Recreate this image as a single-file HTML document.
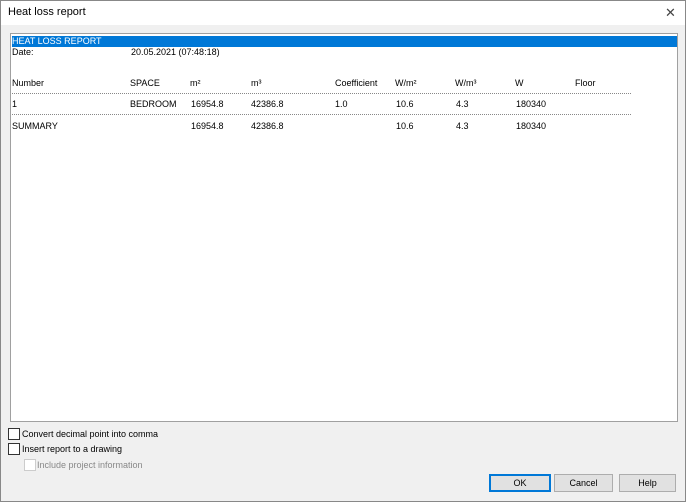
<!DOCTYPE html>
<html><head><meta charset="utf-8"><style>
*{margin:0;padding:0;box-sizing:border-box}
body{width:686px;height:502px;overflow:hidden;background:#f0f0f0;font-family:"Liberation Sans",sans-serif;font-size:9px;color:#000;position:relative}
.win{position:absolute;left:0;top:0;width:686px;height:502px;border:1px solid #888;z-index:5;pointer-events:none}
.title{position:absolute;left:0;top:0;width:686px;height:25px;background:#fff}
.title span{position:absolute;left:8px;top:6px;font-size:11px}
.x{position:absolute;left:665px;top:5px;font-size:13px;color:#444;font-weight:100}
.box{position:absolute;left:10px;top:33px;width:668px;height:389px;background:#fff;border:1px solid #a0a0a0}
.t{position:absolute;white-space:nowrap}
.hl{position:absolute;left:1px;top:2px;width:665px;height:11px;background:#0078d7}
.dash{position:absolute;left:1px;width:619px;height:0;border-top:1px dotted #888}
.cb{position:absolute;width:12px;height:12px;border:1px solid #333;background:#fff}
.btn{position:absolute;top:474px;height:18px;background:#e1e1e1;border:1px solid #adadad;text-align:center;line-height:16px;font-size:9px}
</style></head><body>
<div class="title"><span>Heat loss report</span><div class="x">✕</div></div>
<div class="box">
<div class="hl"></div>
<div class="t" style="left:1px;top:2px;color:#fff">HEAT LOSS REPORT</div>
<div class="t" style="left:1px;top:13px">Date:</div>
<div class="t" style="left:120px;top:13px">20.05.2021 (07:48:18)</div>
<div class="t" style="left:1px;top:44px">Number</div>
<div class="t" style="left:119px;top:44px">SPACE</div>
<div class="t" style="left:179px;top:44px">m²</div>
<div class="t" style="left:240px;top:44px">m³</div>
<div class="t" style="left:324px;top:44px">Coefficient</div>
<div class="t" style="left:384px;top:44px">W/m²</div>
<div class="t" style="left:444px;top:44px">W/m³</div>
<div class="t" style="left:504px;top:44px">W</div>
<div class="t" style="left:564px;top:44px">Floor</div>
<div class="dash" style="top:59px"></div>
<div class="t" style="left:1px;top:65px">1</div>
<div class="t" style="left:119px;top:65px">BEDROOM</div>
<div class="t" style="left:180px;top:65px">16954.8</div>
<div class="t" style="left:240px;top:65px">42386.8</div>
<div class="t" style="left:324px;top:65px">1.0</div>
<div class="t" style="left:385px;top:65px">10.6</div>
<div class="t" style="left:445px;top:65px">4.3</div>
<div class="t" style="left:505px;top:65px">180340</div>
<div class="dash" style="top:80px"></div>
<div class="t" style="left:1px;top:87px">SUMMARY</div>
<div class="t" style="left:180px;top:87px">16954.8</div>
<div class="t" style="left:240px;top:87px">42386.8</div>
<div class="t" style="left:385px;top:87px">10.6</div>
<div class="t" style="left:445px;top:87px">4.3</div>
<div class="t" style="left:505px;top:87px">180340</div>
</div>
<div class="cb" style="left:8px;top:428px"></div>
<div class="t" style="left:22px;top:429px">Convert decimal point into comma</div>
<div class="cb" style="left:8px;top:443px"></div>
<div class="t" style="left:22px;top:444px">Insert report to a drawing</div>
<div class="cb" style="left:24px;top:459px;border-color:#ccc"></div>
<div class="t" style="left:37px;top:460px;color:#888">Include project information</div>
<div class="btn" style="left:489px;width:62px;border:1px solid #0078d7;box-shadow:inset 0 0 0 1px #0078d7">OK</div>
<div class="btn" style="left:554px;width:59px">Cancel</div>
<div class="btn" style="left:619px;width:57px">Help</div>
<div class="win"></div>
</body></html>
